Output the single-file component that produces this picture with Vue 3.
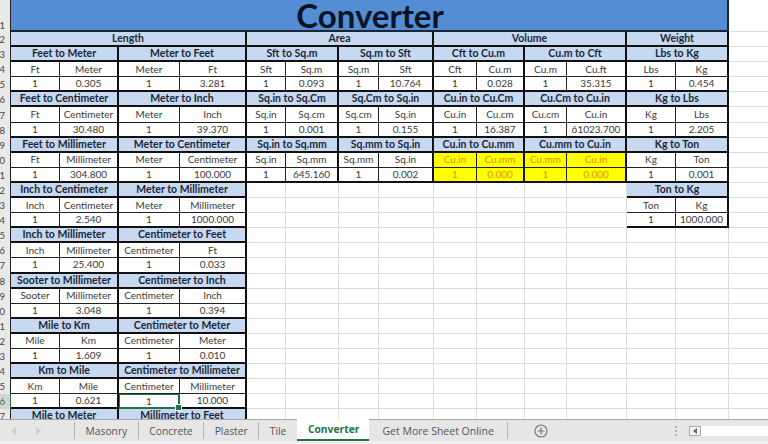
<script setup>
// each column of blocks: [title, left label, right label, result]
const pairs = [
  [
    ['Feet to Meter', 'Ft', 'Meter', '0.305'],
    ['Feet to Centimeter', 'Ft', 'Centimeter', '30.480'],
    ['Feet to Millimeter', 'Ft', 'Millimeter', '304.800'],
    ['Inch to Centimeter', 'Inch', 'Centimeter', '2.540'],
    ['Inch to Millimeter', 'Inch', 'Millimeter', '25.400'],
    ['Sooter to Millimeter', 'Sooter', 'Millimeter', '3.048'],
    ['Mile to Km', 'Mile', 'Km', '1.609'],
    ['Km to Mile', 'Km', 'Mile', '0.621'],
    ['Mile to Meter', 'Mile', 'Meter', '1609.344']
  ],
  [
    ['Meter to Feet', 'Meter', 'Ft', '3.281'],
    ['Meter to Inch', 'Meter', 'Inch', '39.370'],
    ['Meter to Centimeter', 'Meter', 'Centimeter', '100.000'],
    ['Meter to Millimeter', 'Meter', 'Millimeter', '1000.000'],
    ['Centimeter to Feet', 'Centimeter', 'Ft', '0.033'],
    ['Centimeter to Inch', 'Centimeter', 'Inch', '0.394'],
    ['Centimeter to Meter', 'Centimeter', 'Meter', '0.010'],
    ['Centimeter to Millimeter', 'Centimeter', 'Millimeter', '10.000'],
    ['Millimeter to Feet', 'Millimeter', 'Ft', '0.003']
  ],
  [
    ['Sft to Sq.m', 'Sft', 'Sq.m', '0.093'],
    ['Sq.in to Sq.Cm', 'Sq.in', 'Sq.cm', '0.001'],
    ['Sq.in to Sq.mm', 'Sq.in', 'Sq.mm', '645.160']
  ],
  [
    ['Sq.m to Sft', 'Sq.m', 'Sft', '10.764'],
    ['Sq.Cm to Sq.in', 'Sq.cm', 'Sq.in', '0.155'],
    ['Sq.mm to Sq.in', 'Sq.mm', 'Sq.in', '0.002']
  ],
  [
    ['Cft to Cu.m', 'Cft', 'Cu.m', '0.028'],
    ['Cu.in to Cu.Cm', 'Cu.in', 'Cu.cm', '16.387'],
    ['Cu.in to Cu.mm', 'Cu.in', 'Cu.mm', '0.000', true]
  ],
  [
    ['Cu.m to Cft', 'Cu.m', 'Cu.ft', '35.315'],
    ['Cu.Cm to Cu.in', 'Cu.cm', 'Cu.in', '61023.700'],
    ['Cu.mm to Cu.in', 'Cu.mm', 'Cu.in', '0.000', true]
  ],
  [
    ['Lbs to Kg', 'Lbs', 'Kg', '0.454'],
    ['Kg to Lbs', 'Kg', 'Lbs', '2.205'],
    ['Kg to Ton', 'Kg', 'Ton', '0.001'],
    ['Ton to Kg', 'Ton', 'Kg', '1000.000']
  ]
]

const groups = [
  ['Length', 'span4'],
  ['Area', 'span4'],
  ['Volume', 'span4'],
  ['Weight', 'span2']
]

const cells = []
const add = (text, cls) => cells.push({ id: cells.length, text, cls })

add('1', 'head head-first')
add('Converter', 'title span14')
add('', 'blank last')

add('2', 'head')
groups.forEach(g => add(g[0], 'group ' + g[1]))
add('', 'blank last')

for (let row = 3; row <= 27; row++) {
  add(String(row), row === 26 ? 'head head-on' : 'head')
  pairs.forEach((pair, p) => {
    const block = pair[Math.floor((row - 3) / 3)]
    const line = (row - 3) % 3
    if (!block) {
      add('', 'blank')
      add('', 'blank')
      return
    }
    const tone = block[4] ? ' warn' : ''
    if (line === 0) {
      add(block[0], 'block-title span2')
    } else if (line === 1) {
      add(block[1], 'cell' + tone)
      add(block[2], 'cell cell-end' + tone)
    } else {
      add('1', 'cell cell-low' + tone + (row === 26 && p === 1 ? ' picked' : ''))
      add(block[3], 'cell cell-end cell-low' + tone)
    }
  })
  add('', 'blank last')
}

const tabs = ['Masonry', 'Concrete', 'Plaster', 'Tile']
</script>

<template>
  <div class="window">
    <div class="sheet">
      <div v-for="c in cells" :key="c.id" :class="c.cls">
        {{ c.text }}
        <i v-if="c.cls.includes('picked')" class="grip"></i>
      </div>
    </div>

    <div class="tabbar">
      <div class="nav">
        <svg width="6" height="8" viewBox="0 0 6 8"><path d="M5 0v8L0 4z" fill="#cfcfcf" /></svg>
        <svg width="6" height="8" viewBox="0 0 6 8"><path d="M1 0v8l5-4z" fill="#cfcfcf" /></svg>
      </div>
      <div v-for="t in tabs" :key="t" class="tab">{{ t }}</div>
      <div class="tab tab-on">Converter</div>
      <div class="tab tab-more">Get More Sheet Online</div>
      <svg class="plus" width="14" height="14" viewBox="0 0 14 14">
        <circle cx="7" cy="7" r="6" fill="none" stroke="#777" stroke-width="1.1" />
        <path d="M7 3.5v7M3.5 7h7" stroke="#777" stroke-width="1.2" />
      </svg>
      <div class="dots"><i></i><i></i><i></i></div>
      <div class="scroll">
        <div class="scroll-btn">
          <svg width="4" height="6" viewBox="0 0 4 6"><path d="M4 0v6L0 3z" fill="#666" /></svg>
        </div>
        <div class="scroll-track"></div>
      </div>
    </div>
  </div>
</template>

<style scoped>
.window {
  width: 768px;
  height: 444px;
  display: flex;
  flex-direction: column;
  overflow: hidden;
  background: #fff;
  font-family: Lato, "Liberation Sans", sans-serif;
  font-size: 10px;
  color: #3a3a3a;
}

.sheet {
  height: 419px;
  flex: none;
  overflow: hidden;
  display: grid;
  grid-template-columns: 11px 49px 59px 61px 67px 39px 53px 40px 55px 43px 48px 42px 60px 49px 53px 39px;
  grid-template-rows: 32px repeat(26, 15.1px);
}

.sheet > div {
  box-sizing: border-box;
  display: flex;
  align-items: center;
  justify-content: center;
  white-space: nowrap;
  overflow: hidden;
  min-width: 0;
  line-height: 13px;
}

.span2 { grid-column: span 2; }
.span4 { grid-column: span 4; }
.span14 { grid-column: span 14; }

.sheet > .head {
  justify-content: flex-end;
  padding-right: 5px;
  background: #e9e9e9;
  border-right: 1px solid #222;
  color: #444;
  font-size: 9.5px;
}
.sheet > .head-first {
  align-items: flex-end;
}
.sheet > .head-on {
  background: #d4d4d4;
  color: #217346;
  border-right-color: #217346;
}

.sheet > .title {
  background: #548dd4;
  border-right: 2px solid #1b2536;
  border-bottom: 2px solid #1b2536;
  padding-left: 2px;
  color: #0a1428;
  font-size: 33px;
  line-height: 30px;
  font-weight: 700;
}

.sheet > .group,
.sheet > .block-title {
  background: #c6d9f1;
  border-right: 2px solid #111;
  border-bottom: 2px solid #111;
  color: #1c2736;
  font-size: 10.5px;
  font-weight: 700;
}

.sheet > .cell {
  background: #fff;
  border-right: 1px solid #222;
  border-bottom: 1px solid #222;
}
.sheet > .cell-end {
  border-right-width: 2px;
  border-right-color: #111;
}
.sheet > .cell-low {
  border-bottom-width: 2px;
  border-bottom-color: #111;
}
.sheet > .warn {
  background: #ffff00;
  color: #dd9200;
}

.sheet > .picked {
  position: relative;
  overflow: visible;
  border: 1px solid #217346;
  border-bottom: 2px solid #217346;
  border-right: 2px solid #217346;
  z-index: 2;
}
.grip {
  position: absolute;
  right: -4px;
  bottom: -4px;
  width: 5px;
  height: 5px;
  background: #217346;
  border: 1px solid #fff;
}

.sheet > .blank {
  border-right: 1px solid #dcdcdc;
  border-bottom: 1px solid #dcdcdc;
}
.sheet > .last {
  border-right: 0;
}

.tabbar {
  flex: 1;
  display: flex;
  align-items: stretch;
  background: #e6e6e6;
  border-top: 1px solid #a8a8a8;
  border-bottom: 3px solid #f0f0f0;
  box-sizing: border-box;
  font-family: "Open Sans", "Liberation Sans", sans-serif;
  font-size: 10.3px;
  color: #555;
}

.nav {
  width: 74px;
  flex: none;
  box-sizing: border-box;
  display: flex;
  align-items: center;
  padding-left: 11px;
  gap: 18px;
}

.tab {
  display: flex;
  align-items: center;
  padding: 0 10.5px;
  border-left: 1px solid #b4b4b4;
  margin: 2px 0;
}

.tab-on {
  margin: -1px 0 0;
  padding: 0 10px 0 11px;
  background: #fff;
  border-left: 0;
  border-bottom: 2px solid #217346;
  color: #217346;
  font-weight: 700;
}

.tab-more {
  border-left: 0;
  border-right: 1px solid #b4b4b4;
  padding: 0 13px;
  font-size: 10.5px;
}

.plus {
  flex: none;
  align-self: center;
  margin-left: 26px;
}

.dots {
  display: flex;
  flex-direction: column;
  justify-content: center;
  gap: 2px;
  margin-left: 127px;
}
.dots i {
  display: block;
  width: 2px;
  height: 2px;
  background: #b0b0b0;
}

.scroll {
  display: flex;
  align-items: stretch;
  margin: 6px 0 5px 12px;
  flex: 1;
}
.scroll-btn {
  width: 12px;
  box-sizing: border-box;
  display: flex;
  align-items: center;
  justify-content: center;
  background: #f4f4f4;
  border: 1px solid #ababab;
}
.scroll-track {
  flex: 1;
  background: #fff;
}
</style>
